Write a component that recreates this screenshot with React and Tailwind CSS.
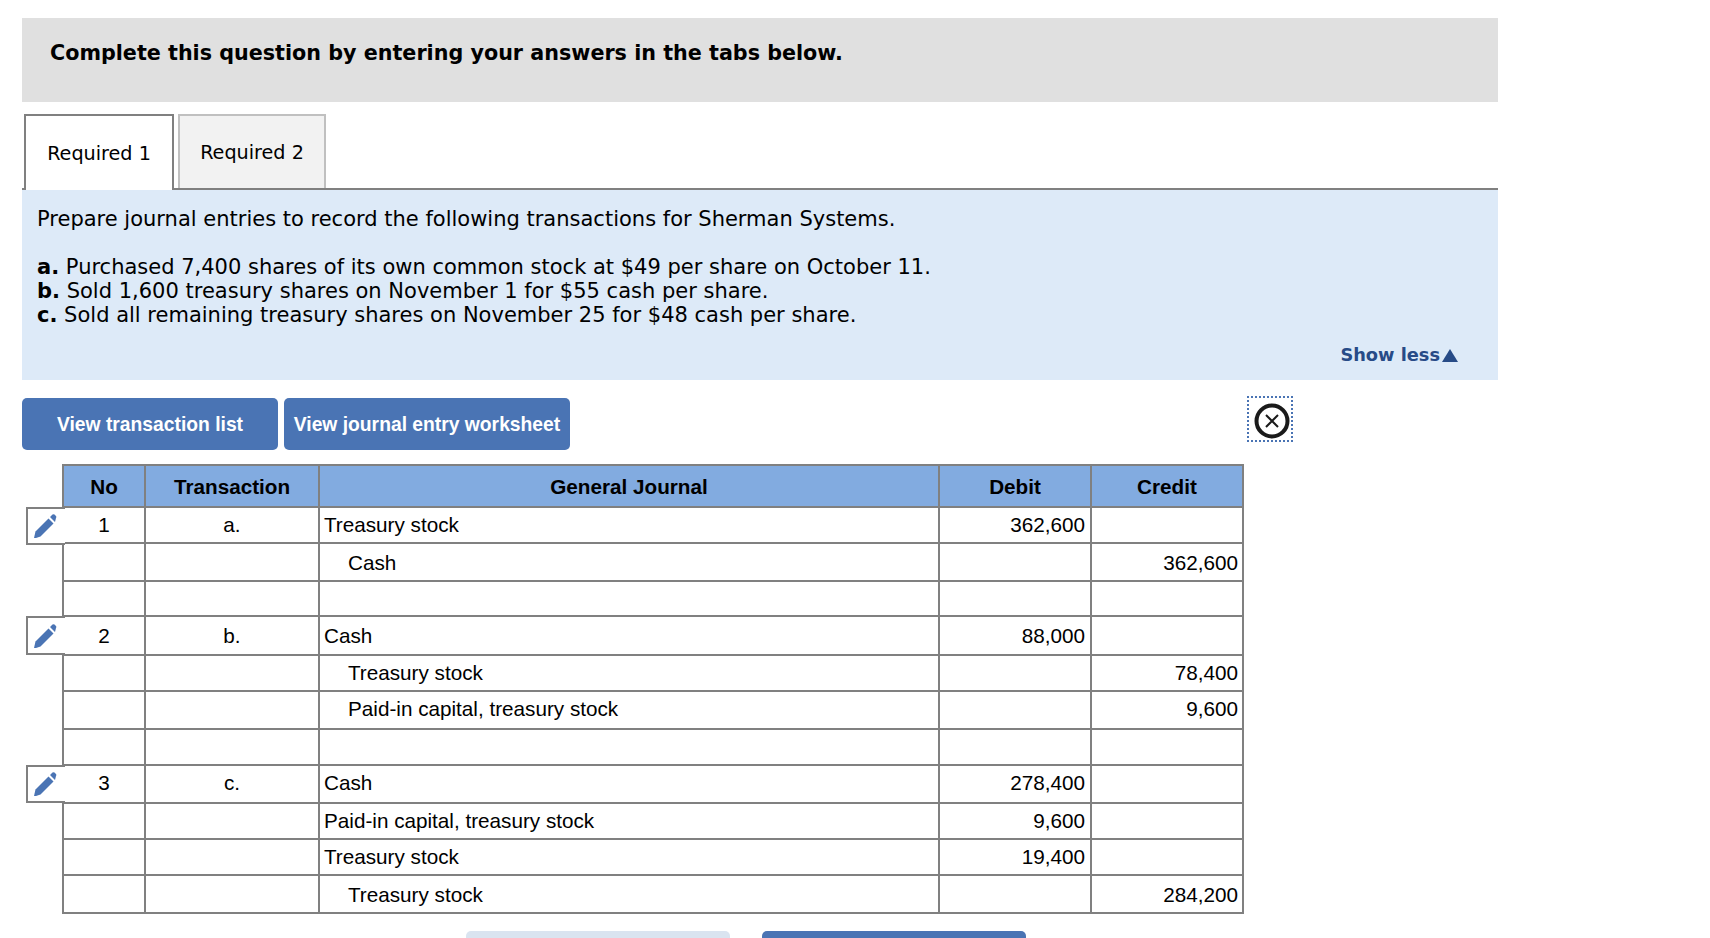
import React from 'react';

const rows = [
    { no: '1', tx: 'a.', acct: 'Treasury stock', debit: '362,600', h: 'h-[36px]', box: '-bottom-[3px]' },
    { acct: 'Cash', indent: true, credit: '362,600', h: 'h-[38px]', pad: 'pt-[2px]' },
    { h: 'h-[35px]' },
    { no: '2', tx: 'b.', acct: 'Cash', debit: '88,000', h: 'h-[39px]', pad: 'pt-[1px]' },
    { acct: 'Treasury stock', indent: true, credit: '78,400', h: 'h-[36px]' },
    { acct: 'Paid-in capital, treasury stock', indent: true, credit: '9,600', h: 'h-[38px]', pad: 'pb-[2px]' },
    { h: 'h-[36px]' },
    { no: '3', tx: 'c.', acct: 'Cash', debit: '278,400', h: 'h-[38px]', pad: 'pb-[2px]' },
    { acct: 'Paid-in capital, treasury stock', debit: '9,600', h: 'h-[36px]' },
    { acct: 'Treasury stock', debit: '19,400', h: 'h-[36px]' },
    { acct: 'Treasury stock', indent: true, credit: '284,200', h: 'h-[38px]', pad: 'pt-[2px]' },
];

const Pencil = () => (
    <svg width="24" height="26" viewBox="0 0 24 26" className="block">
        <path d="M1 25 L2.5 18.5 L15.5 5.5 L20.5 10.5 L7.5 23.5 L3 25 Z" fill="#4a74b4" />
        <path d="M17 4 L19.5 1.5 Q20.5 0.8 21.5 1.5 L23 3 Q23.8 4 23 5 L22 9 Z" fill="#4a74b4" />
    </svg>
);

const App = () => {
    return (
        <div className="h-[938px] overflow-hidden bg-white pt-[18px] pl-[22px] font-['Liberation_Sans',Arial,sans-serif] text-black">
            <div className="w-[1476px]">
                <div className="h-[84px] bg-[#e0e0e0] pl-[28px] pt-[21px] font-['DejaVu_Sans',Verdana,sans-serif] text-[20.7px] font-bold leading-[28px]">
                    Complete this question by entering your answers in the tabs below.
                </div>

                <div className="mt-[12px] flex h-[76px] gap-[4px] border-b-2 border-[#808080] pl-[2px] font-['DejaVu_Sans',Verdana,sans-serif] text-[19.2px]">
                    <div className="z-10 -mb-[2px] flex h-[76px] w-[150px] items-center justify-center border-2 border-b-0 border-[#808080] bg-white pt-[2px]">Required 1</div>
                    <div className="flex h-[74px] w-[148px] items-center justify-center border-2 border-b-0 border-[#c0c0c0] bg-[#f2f2f2] pt-[2px]">Required 2</div>
                </div>

                <div className="relative h-[190px] bg-[#ddeaf8] pl-[15px] pt-[17px] font-['DejaVu_Sans',Verdana,sans-serif] text-[21px] leading-[24px]">
                    <p>Prepare journal entries to record the following transactions for Sherman Systems.</p>
                    <p className="mt-[24px]"><b>a.</b> Purchased 7,400 shares of its own common stock at $49 per share on October 11.</p>
                    <p><b>b.</b> Sold 1,600 treasury shares on November 1 for $55 cash per share.</p>
                    <p><b>c.</b> Sold all remaining treasury shares on November 25 for $48 cash per share.</p>
                    <div className="absolute right-[40px] bottom-[14px] flex items-center gap-[2px] text-[17.8px] font-bold leading-[22px] text-[#274b87]">
                        Show less
                        <svg width="16" height="13" viewBox="0 0 16 13"><path d="M8 0 L16 13 L0 13 Z" fill="#274b87" /></svg>
                    </div>
                </div>
            </div>

            <div className="mt-[18px] flex w-[1271px] items-start justify-between">
                <div className="flex gap-[6px] text-[19.3px] font-bold text-white">
                    <button className="h-[52px] w-[256px] rounded-[5px] bg-[#4a74b4] pt-[3px]">View transaction list</button>
                    <button className="h-[52px] w-[286px] rounded-[5px] bg-[#4a74b4] pt-[3px]">View journal entry worksheet</button>
                </div>
                <div className="-mt-[2px] flex h-[46px] w-[46px] items-center justify-center border-2 border-dotted border-[#4a74b4] pl-[4px] pt-[3px]">
                    <svg width="36" height="36" viewBox="0 0 36 36">
                        <circle cx="18" cy="18" r="15.5" fill="none" stroke="#1a1a1a" strokeWidth="4" />
                        <path d="M12 12 L24 24 M24 12 L12 24" stroke="#1a1a1a" strokeWidth="2" />
                    </svg>
                </div>
            </div>

            <div className="mt-[14px] pl-[40px]">
                <table className="w-[1180px] table-fixed border-collapse border-2 border-[#808080] text-[20.7px]">
                    <colgroup>
                        <col className="w-[82px]" />
                        <col className="w-[174px]" />
                        <col className="w-[620px]" />
                        <col className="w-[152px]" />
                        <col className="w-[152px]" />
                    </colgroup>
                    <thead>
                        <tr className="h-[42px] bg-[#82abe0] font-bold">
                            <th className="border-2 border-[#808080] pt-[2px]">No</th>
                            <th className="border-2 border-[#808080] pt-[2px]">Transaction</th>
                            <th className="border-2 border-[#808080] pt-[2px]">General Journal</th>
                            <th className="border-2 border-[#808080] pt-[2px]">Debit</th>
                            <th className="border-2 border-[#808080] pt-[2px]">Credit</th>
                        </tr>
                    </thead>
                    <tbody>
                        {rows.map((row, i) => (
                            <tr key={i} className={row.h}>
                                <td className={`relative border-2 border-[#808080] px-0 text-center ${row.pad || 'py-0'}`}>
                                    {row.no && (
                                        <div className={`absolute -top-[1px] -left-[38px] flex w-[39px] items-center border-2 border-r-0 border-[#808080] bg-white pl-[5px] ${row.box || '-bottom-[1px]'}`}>
                                            <Pencil />
                                        </div>
                                    )}
                                    {row.no}
                                </td>
                                <td className={`border-2 border-[#808080] px-0 text-center ${row.pad || 'py-0'}`}>{row.tx}</td>
                                <td className={`border-2 border-[#808080] pr-0 ${row.indent ? 'pl-[28px]' : 'pl-[4px]'} ${row.pad || 'py-0'}`}>{row.acct}</td>
                                <td className={`border-2 border-[#808080] pl-0 pr-[5px] text-right ${row.pad || 'py-0'}`}>{row.debit}</td>
                                <td className={`border-2 border-[#808080] pl-0 pr-[4px] text-right ${row.pad || 'py-0'}`}>{row.credit}</td>
                            </tr>
                        ))}
                    </tbody>
                </table>
            </div>

            <div className="mt-[17px] flex gap-[32px] pl-[444px]">
                <div className="h-[40px] w-[264px] rounded-[5px] bg-[#dae4f0]"></div>
                <div className="h-[40px] w-[264px] rounded-[5px] bg-[#4a74b4]"></div>
            </div>
        </div>
    );
};

export default App;
